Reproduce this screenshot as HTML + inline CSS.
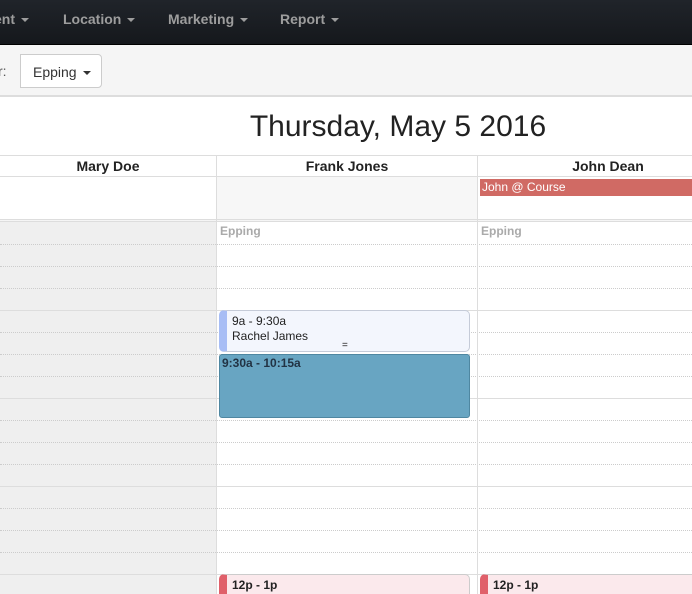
<!DOCTYPE html>
<html><head><style>
*{box-sizing:border-box;margin:0;padding:0}
html,body{width:692px;height:594px;overflow:hidden}
body{background:#fff;font-family:"Liberation Sans",Arial,sans-serif;position:relative}
.nav{position:absolute;left:0;top:0;width:692px;height:45px;background:linear-gradient(#20242a,#15181c);border-bottom:1px solid #000}
.nav span{position:absolute;top:11px;color:#9d9d9d;font-weight:bold;font-size:14px}
.car{display:inline-block;width:0;height:0;border-left:4px solid transparent;border-right:4px solid transparent;border-top:4px solid #9d9d9d;vertical-align:middle;margin-left:6px}
.tb{position:absolute;left:0;top:45px;width:692px;height:52px;background:#f5f5f5;border-bottom:2px solid #ddd}
.btn{position:absolute;left:20px;top:9px;width:82px;height:34px;background:#fff;border:1px solid #ccc;border-radius:0 4px 4px 0;font-size:14px;color:#333;padding:9px 0 0 12px}
.a{position:absolute}
.title{left:0;width:796px;top:110px;text-align:center;font-size:30px;color:#222}
.h{top:155px;height:22px;border-top:1px solid #ddd;border-bottom:1px solid #ddd}
.v{width:1px;background:#ddd}
.ev{position:absolute;font-size:12px}
.d{position:absolute;left:0;width:692px;height:0;border-top:1px dotted #ccc}
.s{position:absolute;left:0;width:692px;height:1px;background:#ddd}
</style></head><body>
<div class="nav">
<span style="left:-6px">ent<i class="car"></i></span>
<span style="left:63px">Location<i class="car"></i></span>
<span style="left:168px">Marketing<i class="car"></i></span>
<span style="left:280px">Report<i class="car"></i></span>
</div>
<div class="tb">
<span style="position:absolute;left:-2px;top:18px;font-size:14px;color:#555">r:</span>
<div class="btn">Epping<i class="car" style="border-top-color:#333"></i></div>
</div>
<div class="a title">Thursday, May 5 2016</div>
<div class="a h" style="left:0;width:692px;"></div>
<div class="a" style="left:0;width:216px;top:158px;text-align:center;font-weight:bold;font-size:14px;color:#222">Mary Doe</div>
<div class="a" style="left:217px;width:260px;top:158px;text-align:center;font-weight:bold;font-size:14px;color:#222">Frank Jones</div>
<div class="a" style="left:478px;width:260px;top:158px;text-align:center;font-weight:bold;font-size:14px;color:#222">John Dean</div>
<div class="a" style="left:217px;top:177px;width:260px;height:42px;background:#f7f7f7"></div>
<div class="a" style="left:0;top:219px;width:692px;height:3px;border-top:1px solid #ddd;border-bottom:1px solid #ddd;background:#f5f5f5"></div>
<div class="a" style="left:0;top:222px;width:216px;height:372px;background:#efefef"></div>
<div class="d" style="top:244px"></div><div class="d" style="top:266px"></div><div class="d" style="top:288px"></div><div class="s" style="top:310px"></div>
<div class="d" style="top:332px"></div><div class="d" style="top:354px"></div><div class="d" style="top:376px"></div><div class="s" style="top:398px"></div>
<div class="d" style="top:420px"></div><div class="d" style="top:442px"></div><div class="d" style="top:464px"></div><div class="s" style="top:486px"></div>
<div class="d" style="top:508px"></div><div class="d" style="top:530px"></div><div class="d" style="top:552px"></div><div class="s" style="top:574px"></div>
<div class="a v" style="left:216px;top:155px;height:439px"></div>
<div class="a v" style="left:477px;top:155px;height:439px"></div>
<div class="a" style="left:220px;top:224px;font-size:12px;font-weight:bold;color:#aaa">Epping</div>
<div class="a" style="left:481px;top:224px;font-size:12px;font-weight:bold;color:#aaa">Epping</div>
<div class="ev" style="left:480px;top:179px;width:212px;height:17px;background:#d06a64;color:#fff;padding:1px 0 0 2px">John @ Course</div>
<div class="ev" style="left:219px;top:310px;width:251px;height:42px;background:#f3f6fd;border:1px solid #c5cbd8;border-left:8px solid #a7bdf5;border-radius:5px;color:#222;padding:3px 0 0 5px;line-height:15px">9a - 9:30a<br>Rachel James<span style="position:absolute;left:115px;top:27px;font-size:10px">=</span></div>
<div class="ev" style="left:219px;top:354px;width:251px;height:64px;background:#68a5c2;border:1px solid #4f87a1;border-radius:3px;color:#234;padding:1px 0 0 2px;font-weight:bold">9:30a - 10:15a</div>
<div class="ev" style="left:219px;top:574px;width:251px;height:30px;background:#fbe9ec;border:1px solid #ccc;border-left:8px solid #e0606a;border-radius:5px;color:#222;padding:3px 0 0 5px;font-weight:bold">12p - 1p</div>
<div class="ev" style="left:480px;top:574px;width:220px;height:30px;background:#fbe9ec;border:1px solid #ccc;border-left:8px solid #e0606a;border-radius:5px;color:#222;padding:3px 0 0 5px;font-weight:bold">12p - 1p</div>
</body></html>
